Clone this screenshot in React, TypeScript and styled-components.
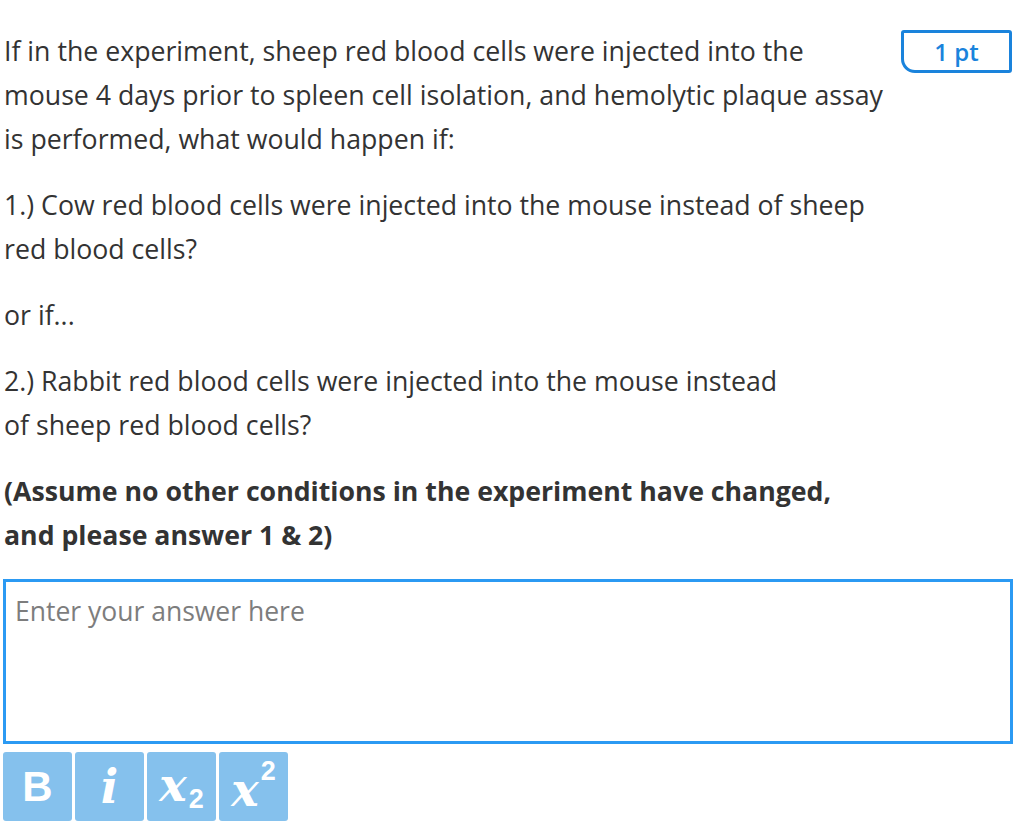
import React from "react";
import styled, { createGlobalStyle } from "styled-components";

const Global = createGlobalStyle`
  html, body { margin: 0; padding: 0; background: #fff; }
  body { font-family: "Open Sans", "Noto Sans", sans-serif; color: #333; }
`;

const Page = styled.div`
  width: 1024px;
  padding-top: 29px;
  box-sizing: border-box;
`;

const Header = styled.div`
  display: flex;
  justify-content: space-between;
  align-items: flex-start;
  padding-left: 4px;
  padding-right: 12px;
`;

const Question = styled.div`
  font-size: 26.7px;
  line-height: 44px;
  white-space: nowrap;
`;

const Para = styled.p<{ $bold?: boolean; $last?: boolean }>`
  margin: 0 0 ${(p) => (p.$last ? "0" : "22px")} 0;
  font-weight: ${(p) => (p.$bold ? 700 : 400)};
`;

const Badge = styled.div`
  width: 111px;
  height: 43px;
  box-sizing: border-box;
  border: 3px solid #1a83dc;
  border-radius: 3px 3px 3px 14px;
  color: #1a83dc;
  font-size: 24px;
  font-weight: 600;
  display: flex;
  align-items: center;
  justify-content: center;
  margin-top: 1px;
`;

const Answer = styled.textarea`
  display: block;
  margin: 22px 0 0 3px;
  width: 1010px;
  height: 165px;
  box-sizing: border-box;
  border: 3px solid #2b9af3;
  padding: 12px 9px;
  font-family: "Open Sans", "Noto Sans", sans-serif;
  font-size: 26.5px;
  line-height: 34px;
  resize: none;
  outline: none;
  color: #333;
  &::placeholder { color: #7d7d7d; }
`;

const Toolbar = styled.div`
  display: flex;
  gap: 3px;
  margin: 8px 0 0 3px;
`;

const ToolButton = styled.button<{ $serif?: boolean }>`
  width: 69px;
  height: 69px;
  border: none;
  border-radius: 3px;
  background: #85c1ed;
  color: #fff;
  padding: 0;
  display: flex;
  align-items: center;
  justify-content: center;
  font-family: ${(p) =>
    p.$serif ? `"DejaVu Serif", "Liberation Serif", serif` : `"Liberation Sans", Arial, sans-serif`};
  font-style: ${(p) => (p.$serif ? "italic" : "normal")};
  font-weight: 700;
  font-size: ${(p) => (p.$serif ? "46px" : "42px")};
  line-height: 1;
  cursor: pointer;
`;

const Glyph = styled.span<{ $shift?: number }>`
  position: relative;
  top: ${(p) => p.$shift ?? 0}px;
`;

const Script = styled.span<{ $up?: boolean }>`
  font-family: "Liberation Sans", Arial, sans-serif;
  font-style: normal;
  font-weight: 700;
  font-size: 27px;
  position: relative;
  top: ${(p) => (p.$up ? "-15px" : "13px")};
  margin-left: 2px;
`;

export default function App() {
  return (
    <Page>
      <Global />
      <Header>
        <Question>
          <Para>
            If in the experiment, sheep red blood cells were injected into the
            <br />
            mouse 4 days prior to spleen cell isolation, and hemolytic plaque assay
            <br />
            is performed, what would happen if:
          </Para>
          <Para>
            1.) Cow red blood cells were injected into the mouse instead of sheep
            <br />
            red blood cells?
          </Para>
          <Para>or if...</Para>
          <Para>
            2.) Rabbit red blood cells were injected into the mouse instead
            <br />
            of sheep red blood cells?
          </Para>
          <Para $bold $last>
            (Assume no other conditions in the experiment have changed,
            <br />
            and please answer 1 &amp; 2)
          </Para>
        </Question>
        <Badge>1 pt</Badge>
      </Header>
      <Answer placeholder="Enter your answer here" />
      <Toolbar>
        <ToolButton>B</ToolButton>
        <ToolButton $serif>i</ToolButton>
        <ToolButton $serif>
          <Glyph $shift={-2}>x</Glyph>
          <Script>2</Script>
        </ToolButton>
        <ToolButton $serif>
          <Glyph $shift={3}>x</Glyph>
          <Script $up>2</Script>
        </ToolButton>
      </Toolbar>
    </Page>
  );
}
